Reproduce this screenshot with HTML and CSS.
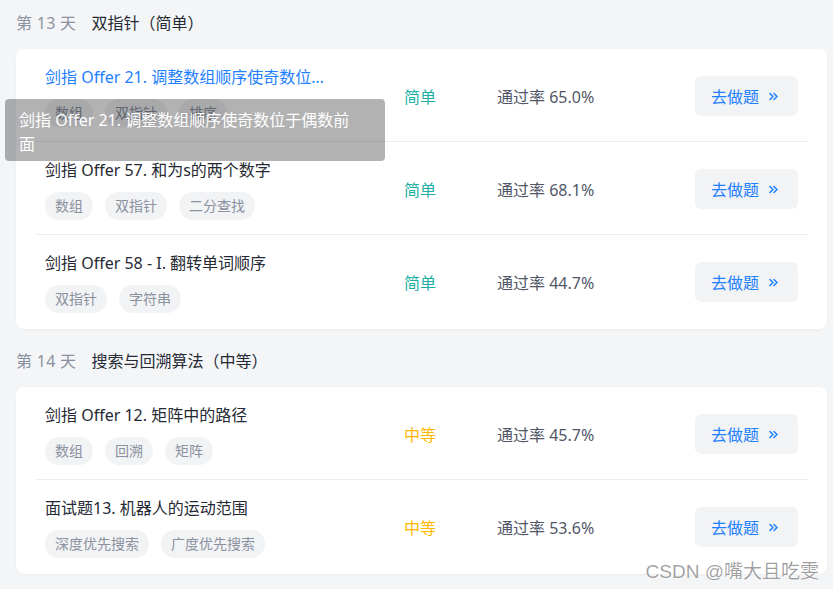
FILE: index.html
```html
<!DOCTYPE html>
<html lang="zh-CN">
<head>
    <meta charset="UTF-8">
    <title>学习计划</title>
    <link rel="stylesheet" href="styles.css">
</head>
<body>
    <div class="day">
        <div class="day-head">
            <span class="day-num">第 13 天</span>
            <span class="day-title">双指针（简单）</span>
        </div>
        <div class="card">
            <div class="row">
                <div class="info">
                    <div class="title active">剑指 Offer 21. 调整数组顺序使奇数位于偶数前面</div>
                    <div class="tags">
                        <span class="tag">数组</span>
                        <span class="tag">双指针</span>
                        <span class="tag">排序</span>
                    </div>
                </div>
                <div class="level easy">简单</div>
                <div class="rate">通过率 65.0%</div>
                <a class="go" href="#">去做题 <svg width="9" height="9" viewBox="0 0 9 9"><path d="M1 1.5l3 3-3 3M5 1.5l3 3-3 3" fill="none" stroke="currentColor" stroke-width="1.5" stroke-linecap="round" stroke-linejoin="round"/></svg></a>
            </div>
            <div class="row">
                <div class="info">
                    <div class="title">剑指 Offer 57. 和为s的两个数字</div>
                    <div class="tags">
                        <span class="tag">数组</span>
                        <span class="tag">双指针</span>
                        <span class="tag">二分查找</span>
                    </div>
                </div>
                <div class="level easy">简单</div>
                <div class="rate">通过率 68.1%</div>
                <a class="go" href="#">去做题 <svg width="9" height="9" viewBox="0 0 9 9"><path d="M1 1.5l3 3-3 3M5 1.5l3 3-3 3" fill="none" stroke="currentColor" stroke-width="1.5" stroke-linecap="round" stroke-linejoin="round"/></svg></a>
            </div>
            <div class="row">
                <div class="info">
                    <div class="title">剑指 Offer 58 - I. 翻转单词顺序</div>
                    <div class="tags">
                        <span class="tag">双指针</span>
                        <span class="tag">字符串</span>
                    </div>
                </div>
                <div class="level easy">简单</div>
                <div class="rate">通过率 44.7%</div>
                <a class="go" href="#">去做题 <svg width="9" height="9" viewBox="0 0 9 9"><path d="M1 1.5l3 3-3 3M5 1.5l3 3-3 3" fill="none" stroke="currentColor" stroke-width="1.5" stroke-linecap="round" stroke-linejoin="round"/></svg></a>
            </div>
        </div>
    </div>

    <div class="day">
        <div class="day-head">
            <span class="day-num">第 14 天</span>
            <span class="day-title">搜索与回溯算法（中等）</span>
        </div>
        <div class="card">
            <div class="row">
                <div class="info">
                    <div class="title">剑指 Offer 12. 矩阵中的路径</div>
                    <div class="tags">
                        <span class="tag">数组</span>
                        <span class="tag">回溯</span>
                        <span class="tag">矩阵</span>
                    </div>
                </div>
                <div class="level medium">中等</div>
                <div class="rate">通过率 45.7%</div>
                <a class="go" href="#">去做题 <svg width="9" height="9" viewBox="0 0 9 9"><path d="M1 1.5l3 3-3 3M5 1.5l3 3-3 3" fill="none" stroke="currentColor" stroke-width="1.5" stroke-linecap="round" stroke-linejoin="round"/></svg></a>
            </div>
            <div class="row">
                <div class="info">
                    <div class="title">面试题13. 机器人的运动范围</div>
                    <div class="tags">
                        <span class="tag">深度优先搜索</span>
                        <span class="tag">广度优先搜索</span>
                    </div>
                </div>
                <div class="level medium">中等</div>
                <div class="rate">通过率 53.6%</div>
                <a class="go" href="#">去做题 <svg width="9" height="9" viewBox="0 0 9 9"><path d="M1 1.5l3 3-3 3M5 1.5l3 3-3 3" fill="none" stroke="currentColor" stroke-width="1.5" stroke-linecap="round" stroke-linejoin="round"/></svg></a>
            </div>
        </div>
    </div>

    <div class="tooltip">剑指 Offer 21. 调整数组顺序使奇数位于偶数前面</div>
    <div class="watermark">CSDN @嘴大且吃雯</div>
</body>
</html>
```

FILE: styles.css
```css
body {
    margin: 0;
    padding: 11px 6px 0 16px;
    background: #f4f5f7;
    font-family: "Noto Sans", "Noto Sans CJK SC", sans-serif;
    color: #252933;
    position: relative;
    height: 578px;
    overflow: hidden;
}
.day {
    margin-bottom: 20px;
}
.day-head {
    display: flex;
    gap: 15px;
    font-size: 16px;
    line-height: 24px;
    margin-bottom: 14px;
}
.day-num {
    color: #8a919f;
    letter-spacing: 0.3px;
}
.day-title {
    color: #252933;
}
.card {
    background: #fff;
    border-radius: 8px;
    padding: 0 19px 2px;
    box-shadow: 0 1px 3px rgba(0, 0, 0, 0.04);
}
.row {
    display: grid;
    grid-template-columns: 359px 93px 1fr auto;
    align-items: center;
    padding: 16px 10px 14px;
    border-bottom: 1px solid #eceef1;
}
.row:last-child {
    border-bottom: none;
}
.title {
    font-size: 16px;
    line-height: 24px;
    max-width: 292px;
    white-space: nowrap;
    overflow: hidden;
    text-overflow: ellipsis;
}
.title.active {
    color: #1e80ff;
}
.tags {
    display: flex;
    gap: 12px;
    margin-top: 10px;
}
.tag {
    height: 28px;
    line-height: 28px;
    padding: 0 10px;
    border-radius: 14px;
    background: #f2f3f5;
    color: #8a919f;
    font-size: 14px;
}
.level {
    font-size: 16px;
}
.easy {
    color: #1cb0a4;
}
.medium {
    color: #ffb800;
}
.rate {
    font-size: 16px;
    color: #515767;
}
.go {
    display: flex;
    align-items: center;
    justify-content: center;
    gap: 10px;
    width: 103px;
    height: 40px;
    box-sizing: border-box;
    padding-right: 4px;
    border-radius: 6px;
    background: #f2f3f5;
    color: #1e80ff;
    font-size: 16px;
    text-decoration: none;
}
.tooltip {
    position: absolute;
    left: 5px;
    top: 99px;
    width: 338px;
    padding: 9px 28px 5px 14px;
    border-radius: 4px;
    background: rgba(0, 0, 0, 0.3);
    color: #fff;
    font-size: 16px;
    line-height: 24px;
}
.watermark {
    position: absolute;
    right: 14px;
    bottom: 6px;
    font-family: "Liberation Sans", "Noto Sans CJK SC", sans-serif;
    font-size: 19px;
    color: rgba(0, 0, 0, 0.38);
    text-shadow: 0 0 2px #fff, 0 0 2px #fff;
}
```
